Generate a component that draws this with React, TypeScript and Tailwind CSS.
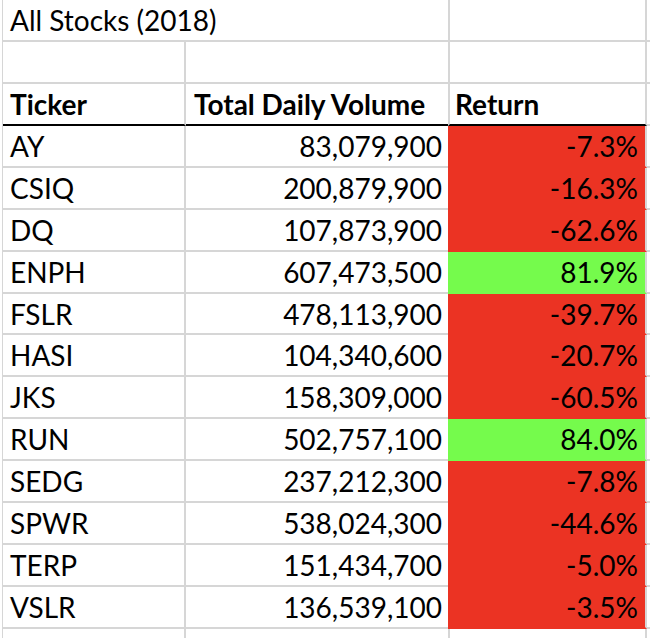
import React from "react";

type Row = { ticker: string; volume: string; ret: string; up: boolean };

const rows: Row[] = [
	{ ticker: "AY", volume: "83,079,900", ret: "-7.3%", up: false },
	{ ticker: "CSIQ", volume: "200,879,900", ret: "-16.3%", up: false },
	{ ticker: "DQ", volume: "107,873,900", ret: "-62.6%", up: false },
	{ ticker: "ENPH", volume: "607,473,500", ret: "81.9%", up: true },
	{ ticker: "FSLR", volume: "478,113,900", ret: "-39.7%", up: false },
	{ ticker: "HASI", volume: "104,340,600", ret: "-20.7%", up: false },
	{ ticker: "JKS", volume: "158,309,000", ret: "-60.5%", up: false },
	{ ticker: "RUN", volume: "502,757,100", ret: "84.0%", up: true },
	{ ticker: "SEDG", volume: "237,212,300", ret: "-7.8%", up: false },
	{ ticker: "SPWR", volume: "538,024,300", ret: "-44.6%", up: false },
	{ ticker: "TERP", volume: "151,434,700", ret: "-5.0%", up: false },
	{ ticker: "VSLR", volume: "136,539,100", ret: "-3.5%", up: false },
];

const cell = "flex items-center border-b-2 border-[#d6d6d6] box-border";

export default function App() {
	return (
		<div
			className="w-[650px] h-[638px] overflow-hidden bg-white text-black text-[28px] leading-none"
			style={{ fontFamily: "Lato, 'Noto Sans', sans-serif" }}
		>
			<div className="ml-[2px] border-l border-[#d6d6d6] w-[900px]">
				{/* title row */}
				<div className="flex h-[42px]">
					<div className={`${cell} w-[445px] pl-[7px] whitespace-nowrap`}>All Stocks (2018)</div>
					<div className={`${cell} w-[199px] border-l-2 border-r-2`} />
					<div className={`${cell} w-[200px]`} />
				</div>

				{/* blank row */}
				<div className="flex h-[42px]">
					<div className={`${cell} w-[183px] border-r-2`} />
					<div className={`${cell} w-[262px]`} />
					<div className={`${cell} w-[199px] border-l-2 border-r-2`} />
					<div className={`${cell} w-[200px]`} />
				</div>

				{/* header row */}
				<div className="flex h-[42px] font-bold">
					<div className={`${cell} w-[183px] border-r-2 border-r-[#d6d6d6] border-b-black pl-[7px]`}>Ticker</div>
					<div className={`${cell} w-[262px] border-b-black pl-[8px] whitespace-nowrap`}>Total Daily Volume</div>
					<div className={`${cell} w-[199px] border-l-2 border-r-2 border-l-[#d6d6d6] border-r-[#d6d6d6] border-b-black pl-[5px]`}>Return</div>
					<div className={`${cell} w-[200px]`} />
				</div>

				{rows.map((r) => (
					<div key={r.ticker} className="flex h-[41.9px]">
						<div className={`${cell} w-[183px] border-r-2 pl-[7px]`}>{r.ticker}</div>
						<div className={`${cell} w-[262px] justify-end pr-[6px]`}>{r.volume}</div>
						<div
							className={`${cell} w-[199px] border-l-2 border-r-2 justify-end pr-[7px] ${
								r.up
									? "bg-[#75fb4c] border-l-[#75fb4c] border-b-[#75fb4c]"
									: "bg-[#eb3323] border-l-[#eb3323] border-b-[#eb3323]"
							} border-r-[#d6d6d6]`}
						>
							{r.ret}
						</div>
						<div className={`${cell} w-[200px]`} />
					</div>
				))}

				{/* partial row at the bottom */}
				<div className="flex h-[42px]">
					<div className={`${cell} w-[183px] border-r-2`} />
					<div className={`${cell} w-[262px]`} />
					<div className={`${cell} w-[199px] border-l-2 border-r-2`} />
					<div className={`${cell} w-[200px]`} />
				</div>
			</div>
		</div>
	);
}
